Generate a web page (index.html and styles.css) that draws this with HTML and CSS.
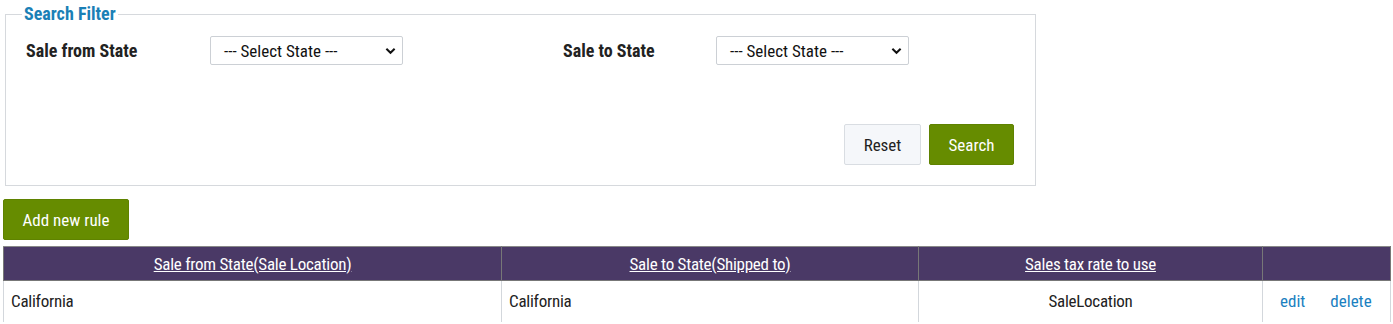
FILE: index.html
```html
<!DOCTYPE html>
<html>
<head>
<meta charset="utf-8">
<link rel="stylesheet" href="styles.css">
</head>
<body>
<div class="page">
  <fieldset class="filter">
    <legend class="filter-title">Search Filter</legend>
    <div class="filter-row">
      <label class="filter-label">Sale from State</label>
      <div class="select-box"><span>--- Select State ---</span><svg class="chev" viewBox="0 0 12 8" width="11" height="8"><path d="M1.5 1.5 L6 6 L10.5 1.5" fill="none" stroke="#111" stroke-width="2.2"/></svg></div>
      <label class="filter-label to-label">Sale to State</label>
      <div class="select-box"><span>--- Select State ---</span><svg class="chev" viewBox="0 0 12 8" width="11" height="8"><path d="M1.5 1.5 L6 6 L10.5 1.5" fill="none" stroke="#111" stroke-width="2.2"/></svg></div>
    </div>
    <div class="filter-actions">
      <button class="btn btn-light">Reset</button>
      <button class="btn btn-green btn-search">Search</button>
    </div>
  </fieldset>
  <button class="btn btn-green btn-add">Add new rule</button>
  <table class="rules">
    <colgroup>
      <col class="c1"><col class="c2"><col class="c3"><col class="c4">
    </colgroup>
    <thead>
      <tr>
        <th><a href="#">Sale from State(Sale Location)</a></th>
        <th><a href="#">Sale to State(Shipped to)</a></th>
        <th><a href="#">Sales tax rate to use</a></th>
        <th></th>
      </tr>
    </thead>
    <tbody>
      <tr>
        <td>California</td>
        <td>California</td>
        <td class="center">SaleLocation</td>
        <td class="actions"><a href="#">edit</a><a href="#">delete</a></td>
      </tr>
    </tbody>
  </table>
</div>
</body>
</html>
```
FILE: styles.css
```css
* { box-sizing: border-box; }
html, body { margin: 0; padding: 0; background: #fff; }
body {
  font-family: "Roboto", "Liberation Sans", sans-serif;
  font-stretch: 80%;
  font-size: 17px;
  color: #222;
}
.page { padding: 4px 3px 0 3px; }
.filter {
  margin: 0 2px;
  width: 1031px;
  height: 182px;
  border: 1px solid #d6d9dd;
  padding: 0 21px 0 20px;
  display: flex;
  flex-direction: column;
}
.filter-title {
  color: #1a80b6;
  font-weight: bold;
  font-size: 18px;
  padding: 0 2px;
  margin-left: -4px;
  line-height: 20px;
}
.filter-row {
  display: grid;
  grid-template-columns: 184px 193px 160px 153px 193px;
  align-items: center;
  margin-top: 12px;
}
.filter-label {
  font-weight: bold;
  font-size: 18px;
  color: #222;
}
.select-box {
  height: 29px;
  border: 1px solid #ccd0d5;
  border-radius: 2px;
  display: flex;
  align-items: center;
  justify-content: space-between;
  padding: 0 6px 0 13px;
  font-size: 17px;
  color: #111;
}
.to-label { grid-column: 4; }
.chev { display: block; }
.filter-actions {
  margin-top: auto;
  margin-bottom: 20px;
  display: flex;
  justify-content: flex-end;
  gap: 8px;
}
.btn {
  font-family: inherit;
  font-stretch: inherit;
  font-size: 17px;
  height: 41px;
  border-radius: 2px;
  cursor: pointer;
}
.btn-light {
  width: 77px;
  background: #f5f7fa;
  border: 1px solid #d9dde2;
  color: #222;
}
.btn-green {
  background: #668c00;
  border: 1px solid #5f8200;
  color: #fff;
}
.btn-search { width: 85px; }
.btn-add {
  display: block;
  margin-top: 13px;
  width: 126px;
  height: 41px;
}
.rules {
  margin-top: 6px;
  width: 1387px;
  border-collapse: collapse;
  table-layout: fixed;
  letter-spacing: -0.25px;
}
.c1 { width: 498px; }
.c2 { width: 417px; }
.c3 { width: 344px; }
.c4 { width: 128px; }
.rules th {
  background: #4a3966;
  height: 34px;
  font-weight: normal;
  border: 1px solid #777;
  border-top: 1px solid #888;
  padding: 0;
  font-size: 17px;
}
.rules th a { color: #fff; text-decoration: underline; }
.rules td {
  height: 41px;
  border-left: 1px solid #d3d7dc;
  border-right: 1px solid #d3d7dc;
  padding: 0 7px;
  color: #222;
  font-size: 17px;
}
.rules td.center { text-align: center; }
.rules td.actions { padding-left: 17px; letter-spacing: 0; }
.rules td.actions a { color: #1a80c0; text-decoration: none; margin-right: 25px; }
```
